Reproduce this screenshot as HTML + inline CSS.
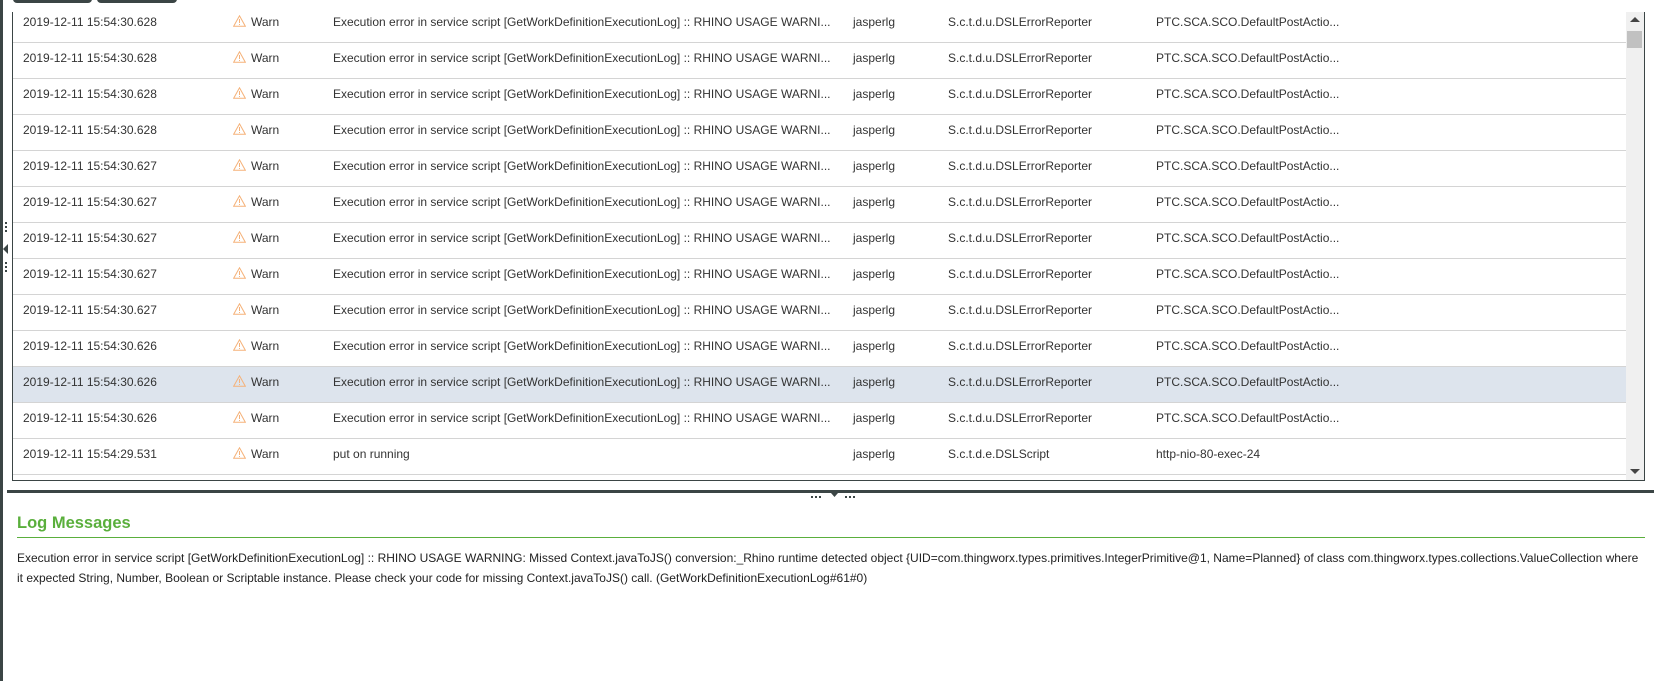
<!DOCTYPE html>
<html><head><meta charset="utf-8"><style>
*{margin:0;padding:0;box-sizing:border-box}
body{width:1654px;height:681px;background:#fff;position:relative;overflow:hidden;font-family:"Liberation Sans",Arial,sans-serif;color:#333;font-size:12px}
.lb{position:absolute;left:0;top:0;width:3px;height:681px;background:#3b4545}
.btn{position:absolute;top:-6px;height:9px;background:#3b4545;border-radius:4px}
.tbl{position:absolute;left:12px;top:12px;width:1633px;height:469px;border:1px solid #3b4545;border-top:none;overflow:hidden}
.rows{position:absolute;left:0;top:-5px;width:1613px}
.row{position:relative;width:1613px;height:36px;border-bottom:1px solid #d4d4d4}
.row span{position:absolute;top:0;line-height:31px;white-space:nowrap}
.row .a{left:10px}.row .b{left:220px}.row .c{left:238px}.row .d{left:320px}.row .e{left:840px}.row .f{left:935px}.row .g{left:1143px}
.hl{background:#dde4ed}
.sb{position:absolute;right:0;top:0;width:18px;height:468px;background:#f0f0f0}
.thumb{position:absolute;left:1px;top:19px;width:15px;height:17px;background:#c1c1c1}
.split{position:absolute;left:7px;top:490px;width:1647px;height:3px;background:#3b4545}
h2{position:absolute;left:17px;top:514px;font-size:16.5px;color:#5aaf3c;font-weight:bold}
.gl{position:absolute;left:17px;top:537px;width:1628px;height:1px;background:#5aaf3c}
.msg{position:absolute;left:17px;top:548px;font-size:12px;line-height:20px;color:#222;white-space:nowrap}
</style></head><body>
<div class="lb"></div>
<div class="btn" style="left:13px;width:79px"></div>
<div class="btn" style="left:97px;width:80px"></div>
<svg style="position:absolute;left:3px;top:222px" width="8" height="52"><g fill="#3b4545"><rect x="2" y="0" width="2" height="2"/><rect x="2" y="4" width="2" height="2"/><rect x="2" y="8" width="2" height="2"/><rect x="2" y="40" width="2" height="2"/><rect x="2" y="44" width="2" height="2"/><rect x="2" y="48" width="2" height="2"/></g><path d="M0 27 L5 22 L5 32Z" fill="#3b4545"/></svg>
<div class="tbl">
<div class="rows">
<div class="row"><span class="a">2019-12-11 15:54:30.628</span><span class="b"><svg width="13" height="12" viewBox="0 0 13 12" style="vertical-align:-1px"><path d="M6.5 0.8 L12.3 11.2 L0.7 11.2Z" fill="none" stroke="#f5b27a"/><rect x="6" y="4" width="1" height="4" fill="#f5b27a"/><rect x="6" y="9" width="1" height="1" fill="#f5b27a"/></svg></span><span class="c">Warn</span><span class="d">Execution error in service script [GetWorkDefinitionExecutionLog] :: RHINO USAGE WARNI...</span><span class="e">jasperlg</span><span class="f">S.c.t.d.u.DSLErrorReporter</span><span class="g">PTC.SCA.SCO.DefaultPostActio...</span></div>
<div class="row"><span class="a">2019-12-11 15:54:30.628</span><span class="b"><svg width="13" height="12" viewBox="0 0 13 12" style="vertical-align:-1px"><path d="M6.5 0.8 L12.3 11.2 L0.7 11.2Z" fill="none" stroke="#f5b27a"/><rect x="6" y="4" width="1" height="4" fill="#f5b27a"/><rect x="6" y="9" width="1" height="1" fill="#f5b27a"/></svg></span><span class="c">Warn</span><span class="d">Execution error in service script [GetWorkDefinitionExecutionLog] :: RHINO USAGE WARNI...</span><span class="e">jasperlg</span><span class="f">S.c.t.d.u.DSLErrorReporter</span><span class="g">PTC.SCA.SCO.DefaultPostActio...</span></div>
<div class="row"><span class="a">2019-12-11 15:54:30.628</span><span class="b"><svg width="13" height="12" viewBox="0 0 13 12" style="vertical-align:-1px"><path d="M6.5 0.8 L12.3 11.2 L0.7 11.2Z" fill="none" stroke="#f5b27a"/><rect x="6" y="4" width="1" height="4" fill="#f5b27a"/><rect x="6" y="9" width="1" height="1" fill="#f5b27a"/></svg></span><span class="c">Warn</span><span class="d">Execution error in service script [GetWorkDefinitionExecutionLog] :: RHINO USAGE WARNI...</span><span class="e">jasperlg</span><span class="f">S.c.t.d.u.DSLErrorReporter</span><span class="g">PTC.SCA.SCO.DefaultPostActio...</span></div>
<div class="row"><span class="a">2019-12-11 15:54:30.628</span><span class="b"><svg width="13" height="12" viewBox="0 0 13 12" style="vertical-align:-1px"><path d="M6.5 0.8 L12.3 11.2 L0.7 11.2Z" fill="none" stroke="#f5b27a"/><rect x="6" y="4" width="1" height="4" fill="#f5b27a"/><rect x="6" y="9" width="1" height="1" fill="#f5b27a"/></svg></span><span class="c">Warn</span><span class="d">Execution error in service script [GetWorkDefinitionExecutionLog] :: RHINO USAGE WARNI...</span><span class="e">jasperlg</span><span class="f">S.c.t.d.u.DSLErrorReporter</span><span class="g">PTC.SCA.SCO.DefaultPostActio...</span></div>
<div class="row"><span class="a">2019-12-11 15:54:30.627</span><span class="b"><svg width="13" height="12" viewBox="0 0 13 12" style="vertical-align:-1px"><path d="M6.5 0.8 L12.3 11.2 L0.7 11.2Z" fill="none" stroke="#f5b27a"/><rect x="6" y="4" width="1" height="4" fill="#f5b27a"/><rect x="6" y="9" width="1" height="1" fill="#f5b27a"/></svg></span><span class="c">Warn</span><span class="d">Execution error in service script [GetWorkDefinitionExecutionLog] :: RHINO USAGE WARNI...</span><span class="e">jasperlg</span><span class="f">S.c.t.d.u.DSLErrorReporter</span><span class="g">PTC.SCA.SCO.DefaultPostActio...</span></div>
<div class="row"><span class="a">2019-12-11 15:54:30.627</span><span class="b"><svg width="13" height="12" viewBox="0 0 13 12" style="vertical-align:-1px"><path d="M6.5 0.8 L12.3 11.2 L0.7 11.2Z" fill="none" stroke="#f5b27a"/><rect x="6" y="4" width="1" height="4" fill="#f5b27a"/><rect x="6" y="9" width="1" height="1" fill="#f5b27a"/></svg></span><span class="c">Warn</span><span class="d">Execution error in service script [GetWorkDefinitionExecutionLog] :: RHINO USAGE WARNI...</span><span class="e">jasperlg</span><span class="f">S.c.t.d.u.DSLErrorReporter</span><span class="g">PTC.SCA.SCO.DefaultPostActio...</span></div>
<div class="row"><span class="a">2019-12-11 15:54:30.627</span><span class="b"><svg width="13" height="12" viewBox="0 0 13 12" style="vertical-align:-1px"><path d="M6.5 0.8 L12.3 11.2 L0.7 11.2Z" fill="none" stroke="#f5b27a"/><rect x="6" y="4" width="1" height="4" fill="#f5b27a"/><rect x="6" y="9" width="1" height="1" fill="#f5b27a"/></svg></span><span class="c">Warn</span><span class="d">Execution error in service script [GetWorkDefinitionExecutionLog] :: RHINO USAGE WARNI...</span><span class="e">jasperlg</span><span class="f">S.c.t.d.u.DSLErrorReporter</span><span class="g">PTC.SCA.SCO.DefaultPostActio...</span></div>
<div class="row"><span class="a">2019-12-11 15:54:30.627</span><span class="b"><svg width="13" height="12" viewBox="0 0 13 12" style="vertical-align:-1px"><path d="M6.5 0.8 L12.3 11.2 L0.7 11.2Z" fill="none" stroke="#f5b27a"/><rect x="6" y="4" width="1" height="4" fill="#f5b27a"/><rect x="6" y="9" width="1" height="1" fill="#f5b27a"/></svg></span><span class="c">Warn</span><span class="d">Execution error in service script [GetWorkDefinitionExecutionLog] :: RHINO USAGE WARNI...</span><span class="e">jasperlg</span><span class="f">S.c.t.d.u.DSLErrorReporter</span><span class="g">PTC.SCA.SCO.DefaultPostActio...</span></div>
<div class="row"><span class="a">2019-12-11 15:54:30.627</span><span class="b"><svg width="13" height="12" viewBox="0 0 13 12" style="vertical-align:-1px"><path d="M6.5 0.8 L12.3 11.2 L0.7 11.2Z" fill="none" stroke="#f5b27a"/><rect x="6" y="4" width="1" height="4" fill="#f5b27a"/><rect x="6" y="9" width="1" height="1" fill="#f5b27a"/></svg></span><span class="c">Warn</span><span class="d">Execution error in service script [GetWorkDefinitionExecutionLog] :: RHINO USAGE WARNI...</span><span class="e">jasperlg</span><span class="f">S.c.t.d.u.DSLErrorReporter</span><span class="g">PTC.SCA.SCO.DefaultPostActio...</span></div>
<div class="row"><span class="a">2019-12-11 15:54:30.626</span><span class="b"><svg width="13" height="12" viewBox="0 0 13 12" style="vertical-align:-1px"><path d="M6.5 0.8 L12.3 11.2 L0.7 11.2Z" fill="none" stroke="#f5b27a"/><rect x="6" y="4" width="1" height="4" fill="#f5b27a"/><rect x="6" y="9" width="1" height="1" fill="#f5b27a"/></svg></span><span class="c">Warn</span><span class="d">Execution error in service script [GetWorkDefinitionExecutionLog] :: RHINO USAGE WARNI...</span><span class="e">jasperlg</span><span class="f">S.c.t.d.u.DSLErrorReporter</span><span class="g">PTC.SCA.SCO.DefaultPostActio...</span></div>
<div class="row hl"><span class="a">2019-12-11 15:54:30.626</span><span class="b"><svg width="13" height="12" viewBox="0 0 13 12" style="vertical-align:-1px"><path d="M6.5 0.8 L12.3 11.2 L0.7 11.2Z" fill="none" stroke="#f5b27a"/><rect x="6" y="4" width="1" height="4" fill="#f5b27a"/><rect x="6" y="9" width="1" height="1" fill="#f5b27a"/></svg></span><span class="c">Warn</span><span class="d">Execution error in service script [GetWorkDefinitionExecutionLog] :: RHINO USAGE WARNI...</span><span class="e">jasperlg</span><span class="f">S.c.t.d.u.DSLErrorReporter</span><span class="g">PTC.SCA.SCO.DefaultPostActio...</span></div>
<div class="row"><span class="a">2019-12-11 15:54:30.626</span><span class="b"><svg width="13" height="12" viewBox="0 0 13 12" style="vertical-align:-1px"><path d="M6.5 0.8 L12.3 11.2 L0.7 11.2Z" fill="none" stroke="#f5b27a"/><rect x="6" y="4" width="1" height="4" fill="#f5b27a"/><rect x="6" y="9" width="1" height="1" fill="#f5b27a"/></svg></span><span class="c">Warn</span><span class="d">Execution error in service script [GetWorkDefinitionExecutionLog] :: RHINO USAGE WARNI...</span><span class="e">jasperlg</span><span class="f">S.c.t.d.u.DSLErrorReporter</span><span class="g">PTC.SCA.SCO.DefaultPostActio...</span></div>
<div class="row"><span class="a">2019-12-11 15:54:29.531</span><span class="b"><svg width="13" height="12" viewBox="0 0 13 12" style="vertical-align:-1px"><path d="M6.5 0.8 L12.3 11.2 L0.7 11.2Z" fill="none" stroke="#f5b27a"/><rect x="6" y="4" width="1" height="4" fill="#f5b27a"/><rect x="6" y="9" width="1" height="1" fill="#f5b27a"/></svg></span><span class="c">Warn</span><span class="d">put on running</span><span class="e">jasperlg</span><span class="f">S.c.t.d.e.DSLScript</span><span class="g">http-nio-80-exec-24</span></div>
</div>
<div class="sb"><svg style="position:absolute;left:4px;top:5px" width="10" height="6"><path d="M0 5 L5 0 L10 5Z" fill="#444"/></svg><div class="thumb"></div><svg style="position:absolute;left:4px;top:457px" width="10" height="6"><path d="M0 0 L10 0 L5 5Z" fill="#444"/></svg></div>
</div>
<div class="split"></div>
<svg style="position:absolute;left:810px;top:493px" width="52" height="8"><g fill="#3b4545"><rect x="1" y="3" width="2" height="2"/><rect x="5" y="3" width="2" height="2"/><rect x="9" y="3" width="2" height="2"/><rect x="35" y="3" width="2" height="2"/><rect x="39" y="3" width="2" height="2"/><rect x="43" y="3" width="2" height="2"/></g><path d="M21 0 L28 0 L24.5 4Z" fill="#3b4545"/></svg>
<h2>Log Messages</h2>
<div class="gl"></div>
<div class="msg">Execution error in service script [GetWorkDefinitionExecutionLog] :: RHINO USAGE WARNING: Missed Context.javaToJS() conversion:_Rhino runtime detected object {UID=com.thingworx.types.primitives.IntegerPrimitive@1, Name=Planned} of class com.thingworx.types.collections.ValueCollection where<br>it expected String, Number, Boolean or Scriptable instance. Please check your code for missing Context.javaToJS() call. (GetWorkDefinitionExecutionLog#61#0)</div>
</body></html>
